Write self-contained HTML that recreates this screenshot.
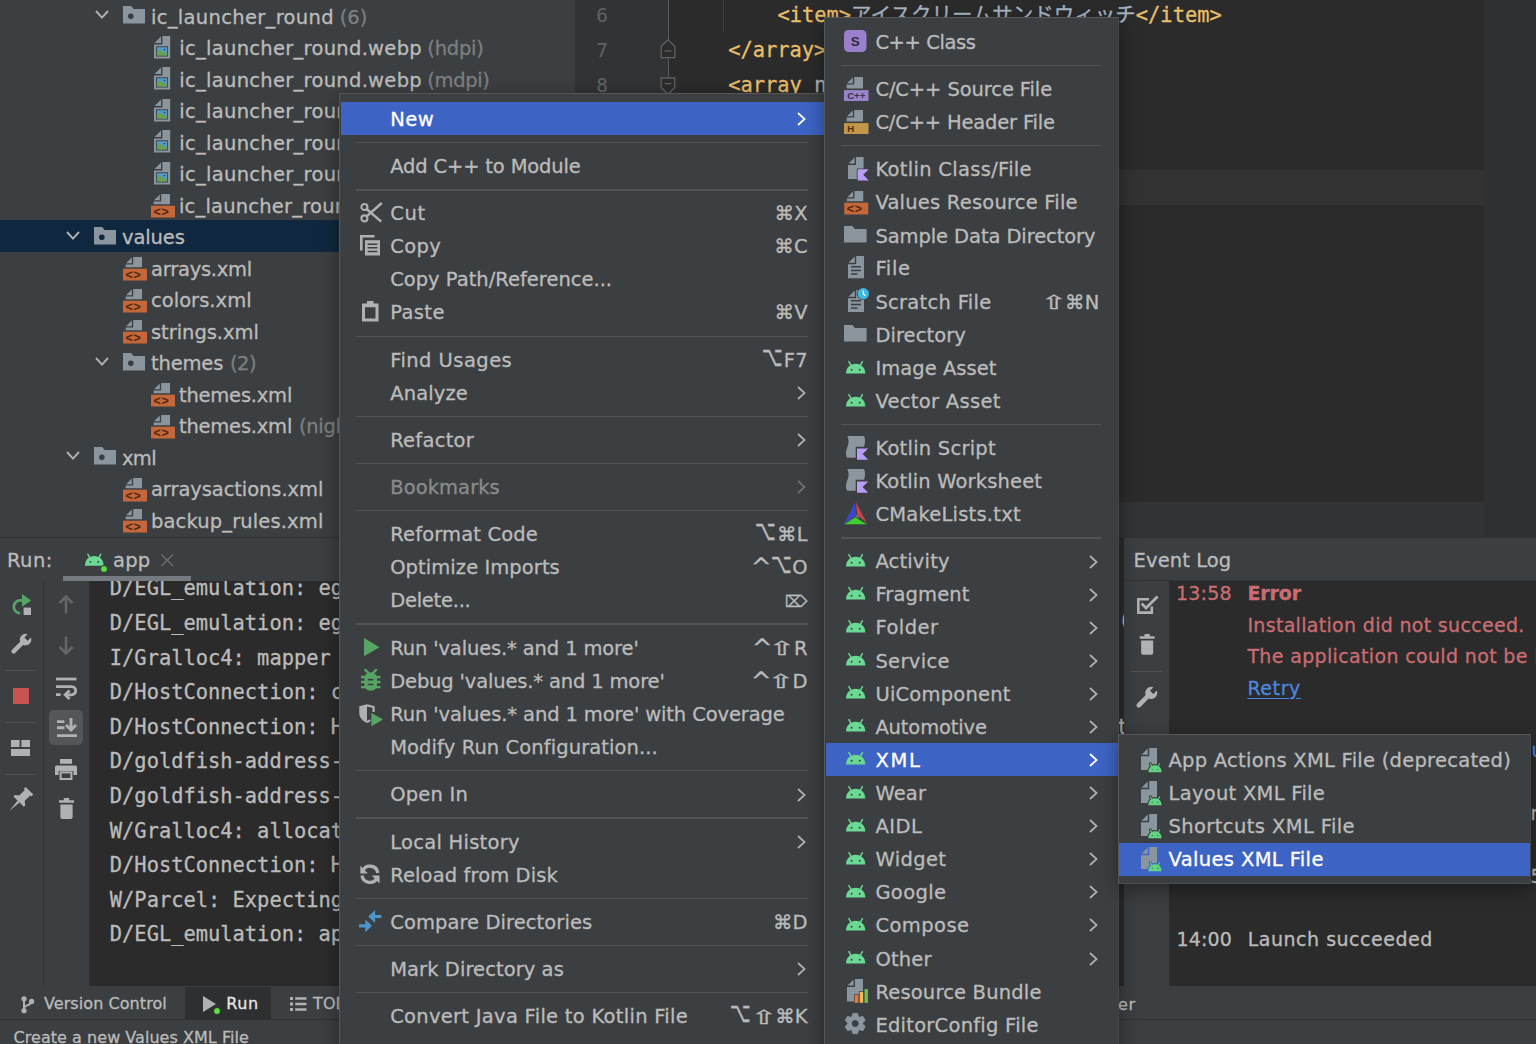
<!DOCTYPE html>
<html lang="en"><head><meta charset="utf-8"><title>Android Studio - New Values XML File</title>
<style>
html,body{margin:0;padding:0}
body{width:1536px;height:1044px;overflow:hidden;position:relative;background:#3c3f41;font-family:"DejaVu Sans","Liberation Sans","Noto Sans CJK JP",sans-serif;font-size:19.5px;color:#bbbbbb}
body>div,body>svg{position:absolute;display:block}
.t{white-space:pre;-webkit-text-stroke:0.3px currentColor}
.m{font-family:"DejaVu Sans Mono","Liberation Mono","Noto Sans CJK JP",monospace}
.sh{display:inline-block;font-size:.98em;line-height:1;transform:scaleX(1.7);margin:0 3.4px 0 3.4px;position:relative;top:.5px}
.op{display:inline-block;transform:scale(0.92,1.4);transform-origin:50% 78%}
.dl{display:inline-block;font-size:.82em;line-height:1}
.ct{display:inline-block;transform:scale(1.25,1.15);margin:0 .2px 0 .8px}
svg{overflow:visible}
svg text{font-family:"Liberation Sans",sans-serif;font-weight:700}
</style></head>
<body>
<div style="left:575px;top:0px;width:961px;height:538px;background:#2b2b2b;"></div>
<div style="left:575px;top:0px;width:93px;height:538px;background:#313335;"></div>
<div style="left:1484px;top:0px;width:52px;height:538px;background:#2f3031;"></div>
<div style="left:668px;top:169.5px;width:816px;height:35px;background:#323232;"></div>
<div style="left:575px;top:502px;width:909px;height:36px;background:#313335;"></div>
<div style="left:723px;top:0px;width:1px;height:32px;background:#3b3b3b;"></div>
<div style="left:667.5px;top:0px;width:1px;height:93px;background:#5a5d5f;"></div>
<svg style="left:660px;top:39px" width="16" height="20" viewBox="0 0 16 20"><path d="M1.2,7.3 L8,0.8 L14.8,7.3 V18.6 H1.2 Z" fill="#2b2b2b" stroke="#5f6265" stroke-width="1.3"/><path d="M4.6,12 H11.4" stroke="#5f6265" stroke-width="1.3"/></svg>
<svg style="left:660px;top:77px" width="16" height="18" viewBox="0 0 16 18"><path d="M1.2,1 H14.8 V10.5 L8,17 L1.2,10.5 Z" fill="#2b2b2b" stroke="#5f6265" stroke-width="1.3"/><path d="M4.6,6.6 H11.4" stroke="#5f6265" stroke-width="1.3"/></svg>
<div id="t1" class="t m" style="left:596.2px;top:0.5px;line-height:30px;font-size:19.4px;color:#606366;-webkit-text-stroke:0;">6</div>
<div id="t2" class="t m" style="left:596.2px;top:35.5px;line-height:30px;font-size:19.4px;color:#606366;-webkit-text-stroke:0;">7</div>
<div id="t3" class="t m" style="left:596.2px;top:70.5px;line-height:30px;font-size:19.4px;color:#606366;-webkit-text-stroke:0;">8</div>
<div id="t4" class="t m" style="left:777.4px;top:-2.5px;line-height:34px;font-size:20.4px;"><span style="color:#e8bf6a">&lt;item&gt;</span><span style="color:#a9b7c6;font-size:20.5px">アイスクリームサンドウィッチ</span><span style="color:#e8bf6a">&lt;/item&gt;</span></div>
<div id="t5" class="t m" style="left:728.2px;top:32.5px;line-height:34px;font-size:20.4px;color:#e8bf6a;">&lt;/array&gt;</div>
<div id="t6" class="t m" style="left:728.2px;top:67.5px;line-height:34px;font-size:20.4px;color:#bababa;"><span style="color:#e8bf6a">&lt;array</span> name=</div>
<div style="left:0px;top:0px;width:575px;height:538px;background:#3c3f41;"></div>
<div style="left:0px;top:220.3px;width:575px;height:31.9px;background:#10283f;"></div>
<svg style="left:95px;top:10.400000000000002px" width="14" height="9" viewBox="0 0 14 9"><path d="M1,1 L7,7.6 L13,1" stroke="#afb1b3" stroke-width="1.9" fill="none"/></svg>
<svg style="left:123px;top:6.400000000000002px" width="22" height="17.5" viewBox="0 0 22 17.5"><path fill-rule="evenodd" fill="#8a959d" d="M0,0 H8.2 L10.6,3 H22 V17.5 H0 Z M7.8,7.4 a2.9,2.9 0 1,0 0.01,0 Z"/></svg>
<div id="t7" class="t" style="left:151.0px;top:2.7px;line-height:30px;letter-spacing:0.322px;">ic_launcher_round</div>
<div id="t8" class="t" style="left:339.7px;top:2.7px;line-height:30px;color:#7d7f80;letter-spacing:-0.012px;">(6)</div>
<svg style="left:154px;top:35.8px" width="16" height="22.5" viewBox="0 0 16 22.5"><path fill="#8a959d" d="M8.4,0 H16.2 V22.5 H0 V8.4 H8.4 Z"/><path fill="#8a959d" d="M0.5,7 L7,0.5 V7 Z"/><rect x="2" y="10.3" width="12" height="10.2" fill="#3c3f41"/><rect x="2.9" y="11.2" width="10.3" height="8.3" fill="#4f9ccb"/><path d="M2.9,19.5 V16.2 C4.5,14.6 6,14 7.2,14.6 L13.2,17.8 V19.5 Z" fill="#69a14f"/><circle cx="10.5" cy="13.6" r="0.8" fill="#3c3f41"/></svg>
<div id="t9" class="t" style="left:179.3px;top:34.2px;line-height:30px;letter-spacing:0.288px;">ic_launcher_round.webp</div>
<div id="t10" class="t" style="left:427.3px;top:34.2px;line-height:30px;color:#7d7f80;letter-spacing:-0.232px;">(hdpi)</div>
<svg style="left:154px;top:67.3px" width="16" height="22.5" viewBox="0 0 16 22.5"><path fill="#8a959d" d="M8.4,0 H16.2 V22.5 H0 V8.4 H8.4 Z"/><path fill="#8a959d" d="M0.5,7 L7,0.5 V7 Z"/><rect x="2" y="10.3" width="12" height="10.2" fill="#3c3f41"/><rect x="2.9" y="11.2" width="10.3" height="8.3" fill="#4f9ccb"/><path d="M2.9,19.5 V16.2 C4.5,14.6 6,14 7.2,14.6 L13.2,17.8 V19.5 Z" fill="#69a14f"/><circle cx="10.5" cy="13.6" r="0.8" fill="#3c3f41"/></svg>
<div id="t11" class="t" style="left:179.3px;top:65.7px;line-height:30px;letter-spacing:0.288px;">ic_launcher_round.webp</div>
<div id="t12" class="t" style="left:427.3px;top:65.7px;line-height:30px;color:#7d7f80;letter-spacing:-0.358px;">(mdpi)</div>
<svg style="left:154px;top:98.8px" width="16" height="22.5" viewBox="0 0 16 22.5"><path fill="#8a959d" d="M8.4,0 H16.2 V22.5 H0 V8.4 H8.4 Z"/><path fill="#8a959d" d="M0.5,7 L7,0.5 V7 Z"/><rect x="2" y="10.3" width="12" height="10.2" fill="#3c3f41"/><rect x="2.9" y="11.2" width="10.3" height="8.3" fill="#4f9ccb"/><path d="M2.9,19.5 V16.2 C4.5,14.6 6,14 7.2,14.6 L13.2,17.8 V19.5 Z" fill="#69a14f"/><circle cx="10.5" cy="13.6" r="0.8" fill="#3c3f41"/></svg>
<div id="t13" class="t" style="left:179.3px;top:97.2px;line-height:30px;letter-spacing:0.288px;">ic_launcher_round.webp</div>
<div id="t14" class="t" style="left:427.3px;top:97.2px;line-height:30px;color:#7d7f80;letter-spacing:-0.617px;">(xhdpi)</div>
<svg style="left:154px;top:130.29999999999998px" width="16" height="22.5" viewBox="0 0 16 22.5"><path fill="#8a959d" d="M8.4,0 H16.2 V22.5 H0 V8.4 H8.4 Z"/><path fill="#8a959d" d="M0.5,7 L7,0.5 V7 Z"/><rect x="2" y="10.3" width="12" height="10.2" fill="#3c3f41"/><rect x="2.9" y="11.2" width="10.3" height="8.3" fill="#4f9ccb"/><path d="M2.9,19.5 V16.2 C4.5,14.6 6,14 7.2,14.6 L13.2,17.8 V19.5 Z" fill="#69a14f"/><circle cx="10.5" cy="13.6" r="0.8" fill="#3c3f41"/></svg>
<div id="t15" class="t" style="left:179.3px;top:128.7px;line-height:30px;letter-spacing:0.288px;">ic_launcher_round.webp</div>
<div id="t16" class="t" style="left:427.3px;top:128.7px;line-height:30px;color:#7d7f80;letter-spacing:-0.890px;">(xxhdpi)</div>
<svg style="left:154px;top:161.79999999999998px" width="16" height="22.5" viewBox="0 0 16 22.5"><path fill="#8a959d" d="M8.4,0 H16.2 V22.5 H0 V8.4 H8.4 Z"/><path fill="#8a959d" d="M0.5,7 L7,0.5 V7 Z"/><rect x="2" y="10.3" width="12" height="10.2" fill="#3c3f41"/><rect x="2.9" y="11.2" width="10.3" height="8.3" fill="#4f9ccb"/><path d="M2.9,19.5 V16.2 C4.5,14.6 6,14 7.2,14.6 L13.2,17.8 V19.5 Z" fill="#69a14f"/><circle cx="10.5" cy="13.6" r="0.8" fill="#3c3f41"/></svg>
<div id="t17" class="t" style="left:179.3px;top:160.2px;line-height:30px;letter-spacing:0.288px;">ic_launcher_round.webp</div>
<div id="t18" class="t" style="left:427.3px;top:160.2px;line-height:30px;color:#7d7f80;letter-spacing:-1.097px;">(xxxhdpi)</div>
<svg style="left:150.7px;top:194.1px" width="24" height="23.5" viewBox="0 0 24 23.5"><g transform="translate(2.6,0)"><path fill="#8a959d" d="M7.6,0 H16.4 V10.2 H0 V7.6 H7.6 Z"/><path fill="#8a959d" d="M0.5,6.2 L6.2,0.5 V6.2 Z"/></g><rect x="0" y="11.7" width="24" height="11.8" fill="#c5673a"/><text x="2.6" y="22.0" font-size="12.5" font-weight="400" text-anchor="start" fill="#50260e" letter-spacing="0.5">&lt;&gt;</text></svg>
<div id="t19" class="t" style="left:179.0px;top:191.7px;line-height:30px;letter-spacing:0.200px;">ic_launcher_round.xml</div>
<div id="t20" class="t" style="left:409.0px;top:191.7px;line-height:30px;color:#7d7f80;">(anydpi-v26)</div>
<svg style="left:66px;top:230.9px" width="14" height="9" viewBox="0 0 14 9"><path d="M1,1 L7,7.6 L13,1" stroke="#afb1b3" stroke-width="1.9" fill="none"/></svg>
<svg style="left:94px;top:226.9px" width="22" height="17.5" viewBox="0 0 22 17.5"><path fill-rule="evenodd" fill="#8a959d" d="M0,0 H8.2 L10.6,3 H22 V17.5 H0 Z M7.8,7.4 a2.9,2.9 0 1,0 0.01,0 Z"/></svg>
<div id="t21" class="t" style="left:122.0px;top:223.2px;line-height:30px;letter-spacing:-0.105px;">values</div>
<svg style="left:122.7px;top:257.1px" width="24" height="23.5" viewBox="0 0 24 23.5"><g transform="translate(2.6,0)"><path fill="#8a959d" d="M7.6,0 H16.4 V10.2 H0 V7.6 H7.6 Z"/><path fill="#8a959d" d="M0.5,6.2 L6.2,0.5 V6.2 Z"/></g><rect x="0" y="11.7" width="24" height="11.8" fill="#c5673a"/><text x="2.6" y="22.0" font-size="12.5" font-weight="400" text-anchor="start" fill="#50260e" letter-spacing="0.5">&lt;&gt;</text></svg>
<div id="t22" class="t" style="left:151.0px;top:254.7px;line-height:30px;letter-spacing:-0.239px;">arrays.xml</div>
<svg style="left:122.7px;top:288.6px" width="24" height="23.5" viewBox="0 0 24 23.5"><g transform="translate(2.6,0)"><path fill="#8a959d" d="M7.6,0 H16.4 V10.2 H0 V7.6 H7.6 Z"/><path fill="#8a959d" d="M0.5,6.2 L6.2,0.5 V6.2 Z"/></g><rect x="0" y="11.7" width="24" height="11.8" fill="#c5673a"/><text x="2.6" y="22.0" font-size="12.5" font-weight="400" text-anchor="start" fill="#50260e" letter-spacing="0.5">&lt;&gt;</text></svg>
<div id="t23" class="t" style="left:151.0px;top:286.2px;line-height:30px;letter-spacing:0.029px;">colors.xml</div>
<svg style="left:122.7px;top:320.1px" width="24" height="23.5" viewBox="0 0 24 23.5"><g transform="translate(2.6,0)"><path fill="#8a959d" d="M7.6,0 H16.4 V10.2 H0 V7.6 H7.6 Z"/><path fill="#8a959d" d="M0.5,6.2 L6.2,0.5 V6.2 Z"/></g><rect x="0" y="11.7" width="24" height="11.8" fill="#c5673a"/><text x="2.6" y="22.0" font-size="12.5" font-weight="400" text-anchor="start" fill="#50260e" letter-spacing="0.5">&lt;&gt;</text></svg>
<div id="t24" class="t" style="left:151.0px;top:317.7px;line-height:30px;letter-spacing:-0.040px;">strings.xml</div>
<svg style="left:95px;top:356.90000000000003px" width="14" height="9" viewBox="0 0 14 9"><path d="M1,1 L7,7.6 L13,1" stroke="#afb1b3" stroke-width="1.9" fill="none"/></svg>
<svg style="left:123px;top:352.90000000000003px" width="22" height="17.5" viewBox="0 0 22 17.5"><path fill-rule="evenodd" fill="#8a959d" d="M0,0 H8.2 L10.6,3 H22 V17.5 H0 Z M7.8,7.4 a2.9,2.9 0 1,0 0.01,0 Z"/></svg>
<div id="t25" class="t" style="left:151.0px;top:349.2px;line-height:30px;letter-spacing:-0.173px;">themes</div>
<div id="t26" class="t" style="left:230.0px;top:349.2px;line-height:30px;color:#7d7f80;letter-spacing:-0.512px;">(2)</div>
<svg style="left:150.7px;top:383.1px" width="24" height="23.5" viewBox="0 0 24 23.5"><g transform="translate(2.6,0)"><path fill="#8a959d" d="M7.6,0 H16.4 V10.2 H0 V7.6 H7.6 Z"/><path fill="#8a959d" d="M0.5,6.2 L6.2,0.5 V6.2 Z"/></g><rect x="0" y="11.7" width="24" height="11.8" fill="#c5673a"/><text x="2.6" y="22.0" font-size="12.5" font-weight="400" text-anchor="start" fill="#50260e" letter-spacing="0.5">&lt;&gt;</text></svg>
<div id="t27" class="t" style="left:179.0px;top:380.7px;line-height:30px;letter-spacing:-0.223px;">themes.xml</div>
<svg style="left:150.7px;top:414.6px" width="24" height="23.5" viewBox="0 0 24 23.5"><g transform="translate(2.6,0)"><path fill="#8a959d" d="M7.6,0 H16.4 V10.2 H0 V7.6 H7.6 Z"/><path fill="#8a959d" d="M0.5,6.2 L6.2,0.5 V6.2 Z"/></g><rect x="0" y="11.7" width="24" height="11.8" fill="#c5673a"/><text x="2.6" y="22.0" font-size="12.5" font-weight="400" text-anchor="start" fill="#50260e" letter-spacing="0.5">&lt;&gt;</text></svg>
<div id="t28" class="t" style="left:179.0px;top:412.2px;line-height:30px;letter-spacing:-0.223px;">themes.xml</div>
<div id="t29" class="t" style="left:299.0px;top:412.2px;line-height:30px;color:#7d7f80;letter-spacing:-0.296px;">(night)</div>
<svg style="left:66px;top:451.40000000000003px" width="14" height="9" viewBox="0 0 14 9"><path d="M1,1 L7,7.6 L13,1" stroke="#afb1b3" stroke-width="1.9" fill="none"/></svg>
<svg style="left:94px;top:447.40000000000003px" width="22" height="17.5" viewBox="0 0 22 17.5"><path fill-rule="evenodd" fill="#8a959d" d="M0,0 H8.2 L10.6,3 H22 V17.5 H0 Z M7.8,7.4 a2.9,2.9 0 1,0 0.01,0 Z"/></svg>
<div id="t30" class="t" style="left:122.0px;top:443.7px;line-height:30px;letter-spacing:-0.679px;">xml</div>
<svg style="left:122.7px;top:477.6px" width="24" height="23.5" viewBox="0 0 24 23.5"><g transform="translate(2.6,0)"><path fill="#8a959d" d="M7.6,0 H16.4 V10.2 H0 V7.6 H7.6 Z"/><path fill="#8a959d" d="M0.5,6.2 L6.2,0.5 V6.2 Z"/></g><rect x="0" y="11.7" width="24" height="11.8" fill="#c5673a"/><text x="2.6" y="22.0" font-size="12.5" font-weight="400" text-anchor="start" fill="#50260e" letter-spacing="0.5">&lt;&gt;</text></svg>
<div id="t31" class="t" style="left:151.0px;top:475.2px;line-height:30px;letter-spacing:-0.083px;">arraysactions.xml</div>
<svg style="left:122.7px;top:509.1px" width="24" height="23.5" viewBox="0 0 24 23.5"><g transform="translate(2.6,0)"><path fill="#8a959d" d="M7.6,0 H16.4 V10.2 H0 V7.6 H7.6 Z"/><path fill="#8a959d" d="M0.5,6.2 L6.2,0.5 V6.2 Z"/></g><rect x="0" y="11.7" width="24" height="11.8" fill="#c5673a"/><text x="2.6" y="22.0" font-size="12.5" font-weight="400" text-anchor="start" fill="#50260e" letter-spacing="0.5">&lt;&gt;</text></svg>
<div id="t32" class="t" style="left:151.0px;top:506.7px;line-height:30px;letter-spacing:0.131px;">backup_rules.xml</div>
<div style="left:0px;top:537px;width:1124px;height:449px;background:#3c3f41;"></div>
<div style="left:0px;top:537px;width:1536px;height:1px;background:#323232;"></div>
<div style="left:88.5px;top:580.5px;width:1035.5px;height:405px;background:#2b2b2b;"></div>
<div style="left:43px;top:580.5px;width:1px;height:405px;background:#323232;"></div>
<div id="t33" class="t m" style="left:109.8px;top:571.3px;line-height:34px;font-size:20.4px;">D/EGL_emulation: eg</div>
<div id="t34" class="t m" style="left:109.8px;top:605.9px;line-height:34px;font-size:20.4px;">D/EGL_emulation: eg</div>
<div id="t35" class="t m" style="left:109.8px;top:640.5px;line-height:34px;font-size:20.4px;">I/Gralloc4: mapper </div>
<div id="t36" class="t m" style="left:109.8px;top:675.1px;line-height:34px;font-size:20.4px;">D/HostConnection: c</div>
<div id="t37" class="t m" style="left:109.8px;top:709.7px;line-height:34px;font-size:20.4px;">D/HostConnection: H</div>
<div id="t38" class="t m" style="left:109.8px;top:744.3px;line-height:34px;font-size:20.4px;">D/goldfish-address-</div>
<div id="t39" class="t m" style="left:109.8px;top:778.9px;line-height:34px;font-size:20.4px;">D/goldfish-address-</div>
<div id="t40" class="t m" style="left:109.8px;top:813.5px;line-height:34px;font-size:20.4px;">W/Gralloc4: allocat</div>
<div id="t41" class="t m" style="left:109.8px;top:848.1px;line-height:34px;font-size:20.4px;">D/HostConnection: H</div>
<div id="t42" class="t m" style="left:109.8px;top:882.7px;line-height:34px;font-size:20.4px;">W/Parcel: Expecting</div>
<div id="t43" class="t m" style="left:109.8px;top:917.3px;line-height:34px;font-size:20.4px;">D/EGL_emulation: ap</div>
<div style="left:0px;top:538px;width:1124px;height:42.5px;background:#3c3f41;"></div>
<div id="t44" class="t" style="left:7.0px;top:546.4px;line-height:30px;letter-spacing:0.446px;">Run:</div>
<svg style="left:85.4px;top:552.8px" width="18.6" height="13.2" viewBox="0 0 20 13"><path d="M0,13 C0,6.6 4.4,2.7 10,2.7 C15.6,2.7 20,6.6 20,13 Z" fill="#6bd894"/><path d="M5.2,4.6 L3,0.6 M14.8,4.6 L17,0.6" stroke="#6bd894" stroke-width="1.5" stroke-linecap="round"/><circle cx="5.8" cy="9" r="1" fill="#3c3f41"/><circle cx="14.2" cy="9" r="1" fill="#3c3f41"/></svg>
<div style="left:100px;top:564.5px;width:6.4px;height:6.4px;border-radius:50%;background:#60e143;border:1px solid #35383a"></div>
<div id="t45" class="t" style="left:113.0px;top:546.4px;line-height:30px;letter-spacing:0.196px;">app</div>
<svg style="left:161px;top:553.5px" width="12.5" height="12.5" viewBox="0 0 12.5 12.5"><path d="M0.5,0.5 L12,12 M12,0.5 L0.5,12" stroke="#6e7073" stroke-width="1.3" fill="none"/></svg>
<div style="left:63.2px;top:576.3px;width:127.4px;height:4.7px;background:#747a80;"></div>
<svg style="left:10.5px;top:593.5px" width="21" height="21" viewBox="0 0 21 21"><path d="M11.5,6.4 H9.2 A6.4,6.4 0 0,0 9.2,19.2" fill="none" stroke="#57a564" stroke-width="2.6"/><path d="M11,0 L20.2,6.4 L11,12.8 Z" fill="#57a564"/><rect x="12.6" y="13.6" width="7.4" height="7.4" fill="#afb1b3"/></svg>
<svg style="left:10.5px;top:633px" width="21" height="21" viewBox="0 0 21 21"><path d="M2.6,18.4 L12.5,8.5" stroke="#afb1b3" stroke-width="4.4" stroke-linecap="round"/><path d="M19.9,4.4 L16.6,7.7 L13.4,4.5 L16.6,1.2 A5.8,5.8 0 1,0 19.9,4.4 Z" fill="#afb1b3"/></svg>
<div style="left:5px;top:669.5px;width:31px;height:1px;background:#515151;"></div>
<div style="left:13px;top:688.2px;width:15.7px;height:15.5px;background:#c75450;"></div>
<div style="left:5px;top:721.5px;width:31px;height:1px;background:#515151;"></div>
<svg style="left:11px;top:739.6px" width="19" height="16" viewBox="0 0 19 16"><path fill="#afb1b3" d="M0,0 H8.6 V7 H0 Z M10.4,0 H19 V7 H10.4 Z M0,9 H19 V16 H0 Z"/></svg>
<div style="left:5px;top:773.5px;width:31px;height:1px;background:#515151;"></div>
<svg style="left:9px;top:789px" width="22" height="22" viewBox="0 0 22 22"><g transform="translate(13.8,8.4) rotate(45) scale(1.18)" fill="#afb1b3"><path d="M-4.6,-8 H4.6 V-5.6 H3.2 V1 L6.2,3.2 V5 H-6.2 V3.2 L-3.2,1 V-5.6 H-4.6 Z"/><path d="M-1.2,5 H1.2 L0,16 Z"/></g></svg>
<svg style="left:58px;top:595px" width="16" height="19" viewBox="0 0 16 19"><path d="M8,1.5 V18.5 M1.6,8 L8,1.5 L14.4,8" fill="none" stroke="#636567" stroke-width="2.6"/></svg>
<svg style="left:58px;top:636px" width="16" height="19" viewBox="0 0 16 19"><path d="M8,0.5 V17.5 M1.6,11 L8,17.5 L14.4,11" fill="none" stroke="#636567" stroke-width="2.6"/></svg>
<svg style="left:55.5px;top:676.5px" width="21" height="22" viewBox="0 0 21 22"><g fill="none" stroke="#afb1b3" stroke-width="2.8"><path d="M0,2 H20.4"/><path d="M0,9.6 H15.6 A4.1,4.1 0 0,1 15.6,17.8 H10"/><path d="M13.6,13.6 L9.2,17.8 L13.6,22"/><path d="M0,17.6 H4.6"/></g></svg>
<div style="left:48.9px;top:710.3px;width:34.5px;height:34.5px;border-radius:5px;background:#53575a"></div>
<svg style="left:56.5px;top:718px" width="20" height="19" viewBox="0 0 20 19"><g fill="none" stroke="#afb1b3" stroke-width="2.9"><path d="M0,3.6 H7.4 M0,9.8 H7.4 M0,17.6 H20"/><path d="M14,0 V11.6 M9,7 L14,12 L19,7"/></g></svg>
<svg style="left:55px;top:759px" width="22" height="21" viewBox="0 0 22 21"><rect x="5" y="0" width="12" height="4.8" fill="#afb1b3"/><path fill="#afb1b3" d="M1.6,6.6 H20.4 Q22,6.6 22,8.2 V16 H18.4 V12 H3.6 V16 H0 V8.2 Q0,6.6 1.6,6.6 Z"/><rect x="5.6" y="13.4" width="10.8" height="6.6" fill="none" stroke="#afb1b3" stroke-width="2"/></svg>
<svg style="left:58.5px;top:798px" width="15" height="21" viewBox="0 0 15 21"><path fill="#afb1b3" d="M4.8,0 H10.2 V2.2 H15 V4.8 H0 V2.2 H4.8 Z M1.4,6.6 H13.6 V19.2 Q13.6,21 11.8,21 H3.2 Q1.4,21 1.4,19.2 Z"/></svg>
<div style="left:1118px;top:538px;width:6.4px;height:448px;background:#2b2b2b;"></div>
<div id="t46" class="t m" style="left:1118.6px;top:603.1px;line-height:34px;font-size:20.4px;">(</div>
<div id="t47" class="t m" style="left:1116.0px;top:710.1px;line-height:34px;font-size:20.4px;">t</div>
<div style="left:1124.4px;top:538px;width:412px;height:448px;background:#3c3f41;"></div>
<div style="left:1169px;top:580.5px;width:367px;height:405px;background:#2b2b2b;"></div>
<div style="left:1124.4px;top:580px;width:412px;height:1px;background:#323232;"></div>
<div id="t48" class="t" style="left:1133.6px;top:545.6px;line-height:30px;letter-spacing:0.088px;">Event Log</div>
<svg style="left:1136.9px;top:595.2px" width="22" height="19" viewBox="0 0 22 19"><path d="M14.8,11.6 V17.6 H1.3 V4.2 H12" fill="none" stroke="#afb1b3" stroke-width="2.6"/><path d="M4.6,8.6 L9,13 L20.6,1.4" fill="none" stroke="#afb1b3" stroke-width="2.8"/></svg>
<svg style="left:1139px;top:634.3px" width="16.3" height="20.7" viewBox="0 0 15 21"><path fill="#afb1b3" d="M4.8,0 H10.2 V2.2 H15 V4.8 H0 V2.2 H4.8 Z M1.4,6.6 H13.6 V19.2 Q13.6,21 11.8,21 H3.2 Q1.4,21 1.4,19.2 Z"/></svg>
<div style="left:1131.2px;top:671.3px;width:31.2px;height:1px;background:#515151;"></div>
<svg style="left:1136.4px;top:686.4px" width="22" height="22" viewBox="0 0 21 21"><path d="M2.6,18.4 L12.5,8.5" stroke="#afb1b3" stroke-width="4.4" stroke-linecap="round"/><path d="M19.9,4.4 L16.6,7.7 L13.4,4.5 L16.6,1.2 A5.8,5.8 0 1,0 19.9,4.4 Z" fill="#afb1b3"/></svg>
<div id="t49" class="t" style="left:1176.0px;top:577.8px;line-height:30px;font-size:19px;color:#c96d73;letter-spacing:0.211px;">13:58</div>
<div id="t50" class="t" style="left:1247.4px;top:577.8px;line-height:30px;font-size:19px;color:#c96d73;font-weight:700;letter-spacing:-0.088px;">Error</div>
<div id="t51" class="t" style="left:1247.4px;top:609.9px;line-height:30px;font-size:19px;color:#c96d73;letter-spacing:0.315px;">Installation did not succeed.</div>
<div id="t52" class="t" style="left:1247.4px;top:641.1px;line-height:30px;font-size:19px;color:#c96d73;letter-spacing:0.349px;">The application could not be installed.</div>
<div id="t53" class="t" style="left:1247.4px;top:672.5px;line-height:30px;font-size:19px;color:#4b87df;letter-spacing:0.586px;text-decoration:underline;text-underline-offset:3px;">Retry</div>
<div id="t54" class="t" style="left:1531.6px;top:735.3px;line-height:30px;font-size:19px;color:#4b87df;">update</div>
<div id="t55" class="t" style="left:1530.6px;top:797.7px;line-height:30px;font-size:19px;">null</div>
<div id="t56" class="t" style="left:1530.6px;top:860.5px;line-height:30px;font-size:19px;">5 ms</div>
<div id="t57" class="t" style="left:1176.4px;top:924.0px;line-height:30px;font-size:19px;letter-spacing:0.161px;">14:00</div>
<div id="t58" class="t" style="left:1247.7px;top:924.0px;line-height:30px;font-size:19px;letter-spacing:0.515px;">Launch succeeded</div>
<div style="left:0px;top:985.5px;width:1536px;height:58.5px;background:#3c3f41;"></div>
<div style="left:0px;top:1019px;width:1536px;height:1px;background:#323232;"></div>
<div style="left:184.6px;top:987px;width:86.4px;height:32px;background:#2d2f30;"></div>
<svg style="left:20.7px;top:995.5px" width="13.5" height="17.5" viewBox="0 0 13.5 17.5"><g fill="#afb1b3"><circle cx="3" cy="2.8" r="2.6"/><circle cx="3" cy="14.7" r="2.6"/><circle cx="10.6" cy="5.4" r="2.6"/></g><path d="M3,2.8 V14.7 M10.6,5.4 C10.6,9.6 3,8.6 3,12.6" fill="none" stroke="#afb1b3" stroke-width="2"/></svg>
<div id="t59" class="t" style="left:44.0px;top:992.4px;line-height:24px;font-size:16px;letter-spacing:0.074px;">Version Control</div>
<svg style="left:203.3px;top:996px" width="13" height="16" viewBox="0 0 13 16"><path d="M0,0 L13,8 L0,16 Z" fill="#afb1b3"/></svg>
<div style="left:213.4px;top:1007.4px;width:6px;height:6px;border-radius:50%;background:#60e143;border:1px solid #2d2f30"></div>
<div id="t60" class="t" style="left:226.3px;top:992.4px;line-height:24px;font-size:16px;color:#e6e6e6;letter-spacing:0.609px;">Run</div>
<svg style="left:289.8px;top:996.5px" width="16.5" height="14" viewBox="0 0 16.5 14"><path fill="#afb1b3" d="M0,0 H3 V3 H0 Z M5.2,0.2 H16.5 V2.8 H5.2 Z M0,5.5 H3 V8.5 H0 Z M5.2,5.7 H16.5 V8.3 H5.2 Z M0,11 H3 V14 H0 Z M5.2,11.2 H16.5 V13.8 H5.2 Z"/></svg>
<div id="t61" class="t" style="left:313.0px;top:992.4px;line-height:24px;font-size:16px;letter-spacing:0.104px;">TODO</div>
<div id="t62" class="t" style="left:1118.0px;top:992.7px;line-height:24px;font-size:16px;letter-spacing:0.578px;">er</div>
<div id="t63" class="t" style="left:13.6px;top:1025.5px;line-height:24px;font-size:16px;letter-spacing:0.037px;">Create a new Values XML File</div>
<div style="left:339px;top:93px;width:486px;height:960px;background:#3c3f41;border:1px solid #555759;border-right-color:#444648;border-bottom-color:#4a4c4e;box-shadow:0 5px 18px rgba(0,0,0,.40);box-sizing:border-box;"></div>
<div style="left:340.5px;top:102px;width:483.3px;height:33.4px;background:#3d64c4;"></div>
<div style="left:356px;top:141.95px;width:452.4px;height:1.5px;background:#515355;"></div>
<div style="left:356px;top:189.25px;width:452.4px;height:1.5px;background:#515355;"></div>
<div style="left:356px;top:335.85px;width:452.4px;height:1.5px;background:#515355;"></div>
<div style="left:356px;top:415.75px;width:452.4px;height:1.5px;background:#515355;"></div>
<div style="left:356px;top:462.85px;width:452.4px;height:1.5px;background:#515355;"></div>
<div style="left:356px;top:509.95px;width:452.4px;height:1.5px;background:#515355;"></div>
<div style="left:356px;top:623.25px;width:452.4px;height:1.5px;background:#515355;"></div>
<div style="left:356px;top:769.85px;width:452.4px;height:1.5px;background:#515355;"></div>
<div style="left:356px;top:817.05px;width:452.4px;height:1.5px;background:#515355;"></div>
<div style="left:356px;top:897.55px;width:452.4px;height:1.5px;background:#515355;"></div>
<div style="left:356px;top:944.85px;width:452.4px;height:1.5px;background:#515355;"></div>
<div style="left:356px;top:991.75px;width:452.4px;height:1.5px;background:#515355;"></div>
<div id="t64" class="t" style="left:390.2px;top:104.7px;line-height:30px;color:#ffffff;letter-spacing:0.533px;">New</div>
<svg style="left:796.5px;top:111.89999999999999px" width="9" height="14" viewBox="0 0 9 14"><path d="M1,1 L7.6,7 L1,13" stroke="#ffffff" stroke-width="1.7" fill="none"/></svg>
<div id="t65" class="t" style="left:390.2px;top:152.1px;line-height:30px;letter-spacing:-0.158px;">Add C++ to Module</div>
<div id="t66" class="t" style="left:390.2px;top:199.1px;line-height:30px;letter-spacing:0.688px;">Cut</div>
<div id="t67" class="t" style="right:728.2px;top:199.1px;line-height:30px;letter-spacing:0.2px;">⌘X</div>
<div id="t68" class="t" style="left:390.2px;top:232.3px;line-height:30px;letter-spacing:0.378px;">Copy</div>
<div id="t69" class="t" style="right:728.2px;top:232.3px;line-height:30px;letter-spacing:0.2px;">⌘C</div>
<div id="t70" class="t" style="left:390.2px;top:265.3px;line-height:30px;letter-spacing:0.001px;">Copy Path/Reference...</div>
<div id="t71" class="t" style="left:390.2px;top:298.3px;line-height:30px;letter-spacing:0.389px;">Paste</div>
<div id="t72" class="t" style="right:728.2px;top:298.3px;line-height:30px;letter-spacing:0.2px;">⌘V</div>
<div id="t73" class="t" style="left:390.2px;top:345.6px;line-height:30px;letter-spacing:0.452px;">Find Usages</div>
<div id="t74" class="t" style="right:728.2px;top:345.6px;line-height:30px;letter-spacing:0.2px;"><span class="op">⌥</span>F7</div>
<div id="t75" class="t" style="left:390.2px;top:378.7px;line-height:30px;letter-spacing:0.126px;">Analyze</div>
<svg style="left:796.5px;top:385.90000000000003px" width="9" height="14" viewBox="0 0 9 14"><path d="M1,1 L7.6,7 L1,13" stroke="#afb1b3" stroke-width="1.7" fill="none"/></svg>
<div id="t76" class="t" style="left:390.2px;top:426.1px;line-height:30px;letter-spacing:0.256px;">Refactor</div>
<svg style="left:796.5px;top:433.3px" width="9" height="14" viewBox="0 0 9 14"><path d="M1,1 L7.6,7 L1,13" stroke="#afb1b3" stroke-width="1.7" fill="none"/></svg>
<div id="t77" class="t" style="left:390.2px;top:473.1px;line-height:30px;color:#8a8c8d;letter-spacing:0.081px;">Bookmarks</div>
<svg style="left:796.5px;top:480.3px" width="9" height="14" viewBox="0 0 9 14"><path d="M1,1 L7.6,7 L1,13" stroke="#6d6f70" stroke-width="1.7" fill="none"/></svg>
<div id="t78" class="t" style="left:390.2px;top:520.3px;line-height:30px;letter-spacing:0.145px;">Reformat Code</div>
<div id="t79" class="t" style="right:728.2px;top:520.3px;line-height:30px;letter-spacing:0.2px;"><span class="op">⌥</span>⌘L</div>
<div id="t80" class="t" style="left:390.2px;top:553.4px;line-height:30px;letter-spacing:0.072px;">Optimize Imports</div>
<div id="t81" class="t" style="right:728.2px;top:553.4px;line-height:30px;letter-spacing:0.2px;"><span class="ct">^</span><span class="op">⌥</span>O</div>
<div id="t82" class="t" style="left:390.2px;top:586.4px;line-height:30px;letter-spacing:-0.259px;">Delete...</div>
<div id="t83" class="t" style="right:728.2px;top:586.4px;line-height:30px;letter-spacing:0.2px;"><span class="dl">⌦</span></div>
<div id="t84" class="t" style="left:390.2px;top:633.8px;line-height:30px;letter-spacing:-0.137px;">Run &#x27;values.* and 1 more&#x27;</div>
<div id="t85" class="t" style="right:728.2px;top:633.8px;line-height:30px;letter-spacing:0.2px;"><span class="ct">^</span><span class="sh">⇧</span>R</div>
<div id="t86" class="t" style="left:390.2px;top:666.8px;line-height:30px;letter-spacing:-0.155px;">Debug &#x27;values.* and 1 more&#x27;</div>
<div id="t87" class="t" style="right:728.2px;top:666.8px;line-height:30px;letter-spacing:0.2px;"><span class="ct">^</span><span class="sh">⇧</span>D</div>
<div id="t88" class="t" style="left:390.2px;top:700.0px;line-height:30px;letter-spacing:-0.118px;">Run &#x27;values.* and 1 more&#x27; with Coverage</div>
<div id="t89" class="t" style="left:390.2px;top:733.0px;line-height:30px;letter-spacing:0.091px;">Modify Run Configuration...</div>
<div id="t90" class="t" style="left:390.2px;top:780.3px;line-height:30px;letter-spacing:0.199px;">Open In</div>
<svg style="left:796.5px;top:787.5px" width="9" height="14" viewBox="0 0 9 14"><path d="M1,1 L7.6,7 L1,13" stroke="#afb1b3" stroke-width="1.7" fill="none"/></svg>
<div id="t91" class="t" style="left:390.2px;top:827.7px;line-height:30px;letter-spacing:0.273px;">Local History</div>
<svg style="left:796.5px;top:834.9px" width="9" height="14" viewBox="0 0 9 14"><path d="M1,1 L7.6,7 L1,13" stroke="#afb1b3" stroke-width="1.7" fill="none"/></svg>
<div id="t92" class="t" style="left:390.2px;top:860.7px;line-height:30px;letter-spacing:0.106px;">Reload from Disk</div>
<div id="t93" class="t" style="left:390.2px;top:907.7px;line-height:30px;letter-spacing:0.079px;">Compare Directories</div>
<div id="t94" class="t" style="right:728.2px;top:907.7px;line-height:30px;letter-spacing:0.2px;">⌘D</div>
<div id="t95" class="t" style="left:390.2px;top:954.9px;line-height:30px;letter-spacing:0.071px;">Mark Directory as</div>
<svg style="left:796.5px;top:962.0999999999999px" width="9" height="14" viewBox="0 0 9 14"><path d="M1,1 L7.6,7 L1,13" stroke="#afb1b3" stroke-width="1.7" fill="none"/></svg>
<div id="t96" class="t" style="left:390.2px;top:1002.3px;line-height:30px;letter-spacing:0.286px;">Convert Java File to Kotlin File</div>
<div id="t97" class="t" style="right:728.2px;top:1002.3px;line-height:30px;letter-spacing:0.2px;"><span class="op">⌥</span><span class="sh">⇧</span>⌘K</div>
<svg style="left:359.7px;top:202.4px" width="22" height="21" viewBox="0 0 22 21"><g fill="none" stroke="#afb1b3"><circle cx="4.4" cy="5" r="3" stroke-width="2.1"/><circle cx="4.4" cy="16.4" r="3" stroke-width="2.1"/><path d="M6.6,7 L21.2,19.6 M6.6,14.4 L21.8,1" stroke-width="2.5"/></g></svg>
<svg style="left:360.4px;top:234.7px" width="20" height="20.5" viewBox="0 0 20 20.5"><path fill="#afb1b3" d="M0,0 H14.5 V2.6 H2.6 V15.5 H0 Z"/><rect x="5" y="5.2" width="15" height="15.3" fill="#afb1b3"/><path d="M7.6,9.2 H17.4 M7.6,12.8 H17.4 M7.6,16.4 H17.4" stroke="#3c3f41" stroke-width="1.5"/></svg>
<svg style="left:361.9px;top:300.8px" width="16.5" height="20.5" viewBox="0 0 16.5 20.5"><path fill-rule="evenodd" fill="#afb1b3" d="M0,2.6 H5 V0 H11.5 V2.6 H16.5 V20.5 H0 Z M3,6.3 V17.5 H13.5 V6.3 Z"/></svg>
<svg style="left:363.7px;top:638.1px" width="15.5" height="18.3" viewBox="0 0 15.5 18.3"><path d="M0,0 L15.5,9.15 L0,18.3 Z" fill="#57a564"/></svg>
<svg style="left:360.6px;top:669.2px" width="19.4" height="21.8" viewBox="0 0 19.4 21.8"><g stroke="#57a564" stroke-width="2.4" fill="none"><path d="M0,8 H19.4 M0,13 H19.4 M0,18.1 H19.4"/><path d="M4.3,0.9 L7.8,4.4 M15.1,0.9 L11.6,4.4" stroke-linecap="round"/></g><path d="M3.4,10 C3.4,5.5 6,3.4 9.7,3.4 C13.4,3.4 16,5.5 16,10 V15 C16,19.5 13.3,21.6 9.7,21.6 C6.1,21.6 3.4,19.5 3.4,15 Z" fill="#57a564"/><path d="M6.8,9.8 H12.4 V11.4 H6.8 Z M6.8,14.7 H12.4 V16.3 H6.8 Z" fill="#3c3f41"/></svg>
<svg style="left:359px;top:703.5px" width="24" height="22.5" viewBox="0 0 24 22.5"><path d="M0.3,2.2 L8,0.3 V19 C3.2,16.8 0.3,13.4 0.3,9 Z" fill="#afb1b3"/><path d="M8,1.4 L14.6,3 V8" fill="none" stroke="#afb1b3" stroke-width="2.2"/><path d="M8,18 C9.5,17.4 10.4,16.8 11.2,16" fill="none" stroke="#afb1b3" stroke-width="2"/><path d="M12.4,9 L24,15.6 L12.4,22.3 Z" fill="#57a564" stroke="#3c3f41" stroke-width="0"/></svg>
<svg style="left:360.4px;top:864.5px" width="20.2" height="19.5" viewBox="0 0 20.2 19.5"><g fill="none" stroke="#afb1b3" stroke-width="3.3"><path d="M2.65,6 A8,8 0 0,1 17.9,8"/><path d="M1.98,10.6 A8,8 0 0,0 17.15,12.8"/></g><path d="M0.4,0.7 V8.4 H7.9 Z" fill="#afb1b3"/><path d="M19.6,18.5 V10.5 H11.8 Z" fill="#afb1b3"/></svg>
<svg style="left:359px;top:910px" width="22.6" height="22" viewBox="0 0 22.6 22"><path fill="#4f94c8" d="M9.3,6.5 L16.1,-0.1 V5 H22.4 V8 H16.1 V12.9 Z M13,15.8 L6.3,9.4 V14.3 H0 V17.5 H6.3 V22.3 Z"/></svg>
<div style="left:824px;top:16.5px;width:295px;height:1040px;background:#3c3f41;border:1px solid #555759;border-right-color:#444648;border-bottom-color:#4a4c4e;box-shadow:0 5px 18px rgba(0,0,0,.40);box-sizing:border-box;"></div>
<div style="left:825.5px;top:743px;width:292.5px;height:33.2px;background:#3d64c4;"></div>
<div style="left:841.2px;top:64.65px;width:259.79999999999995px;height:1.5px;background:#515355;"></div>
<div style="left:841.2px;top:144.85px;width:259.79999999999995px;height:1.5px;background:#515355;"></div>
<div style="left:841.2px;top:423.55px;width:259.79999999999995px;height:1.5px;background:#515355;"></div>
<div style="left:841.2px;top:537.15px;width:259.79999999999995px;height:1.5px;background:#515355;"></div>
<div id="t98" class="t" style="left:875.4px;top:28.1px;line-height:30px;letter-spacing:-0.400px;">C++ Class</div>
<svg style="left:844.1px;top:30.2px" width="22.5" height="22" viewBox="0 0 22.5 22"><rect width="22.5" height="22" rx="4.5" fill="#9a7fcc"/><text x="11.25" y="16" font-size="13.5" text-anchor="middle" fill="#2e2c35">S</text></svg>
<div id="t99" class="t" style="left:875.4px;top:75.3px;line-height:30px;letter-spacing:-0.106px;">C/C++ Source File</div>
<svg style="left:844px;top:77.0px" width="24.5" height="24" viewBox="0 0 24.5 24"><g transform="translate(2.6,0)"><path fill="#8a959d" d="M7.6,0 H16.4 V11.6 H0 V7.6 H7.6 Z"/><path fill="#8a959d" d="M0.5,6.2 L6.2,0.5 V6.2 Z"/></g><rect x="0" y="13.1" width="24.5" height="10.9" fill="#9784c9"/><text x="12.25" y="21.9" font-size="9.6" font-weight="700" text-anchor="middle" fill="#3a3050" letter-spacing="0">C++</text></svg>
<div id="t100" class="t" style="left:875.4px;top:108.3px;line-height:30px;letter-spacing:-0.176px;">C/C++ Header File</div>
<svg style="left:844px;top:110.0px" width="24.5" height="24" viewBox="0 0 24.5 24"><g transform="translate(2.6,0)"><path fill="#8a959d" d="M7.6,0 H16.4 V11.6 H0 V7.6 H7.6 Z"/><path fill="#8a959d" d="M0.5,6.2 L6.2,0.5 V6.2 Z"/></g><rect x="0" y="13.1" width="24.5" height="10.9" fill="#c4964a"/><text x="3.2" y="21.9" font-size="9.6" font-weight="700" text-anchor="start" fill="#4a3510" letter-spacing="0">H</text></svg>
<div id="t101" class="t" style="left:875.4px;top:155.4px;line-height:30px;letter-spacing:0.306px;">Kotlin Class/File</div>
<svg style="left:847.5px;top:157.3px" width="21" height="24" viewBox="0 0 21 24"><path fill="#8a959d" d="M8.0,0 H15.6 V22 H0 V8.0 H8.0 Z"/><path fill="#8a959d" d="M0.5,6.6 L6.6,0.5 V6.6 Z"/><path d="M9.6,12.2 H20.799999999999997 L15.2,17.799999999999997 L20.799999999999997,23.4 H9.6 Z" fill="#b89cf5" stroke="#3c3f41" stroke-width="1.6" paint-order="stroke"/></svg>
<div id="t102" class="t" style="left:875.4px;top:188.4px;line-height:30px;letter-spacing:0.212px;">Values Resource File</div>
<svg style="left:844px;top:190.5px" width="24.5" height="23.5" viewBox="0 0 24 23.5"><g transform="translate(2.6,0)"><path fill="#8a959d" d="M7.6,0 H16.4 V10.2 H0 V7.6 H7.6 Z"/><path fill="#8a959d" d="M0.5,6.2 L6.2,0.5 V6.2 Z"/></g><rect x="0" y="11.7" width="24" height="11.8" fill="#c5673a"/><text x="2.6" y="22.0" font-size="12.5" font-weight="400" text-anchor="start" fill="#50260e" letter-spacing="0.5">&lt;&gt;</text></svg>
<div id="t103" class="t" style="left:875.4px;top:221.6px;line-height:30px;letter-spacing:-0.088px;">Sample Data Directory</div>
<svg style="left:844px;top:225.7px" width="22.6" height="16.6" viewBox="0 0 22.6 16.6"><path fill="#8a959d" d="M0,0 H8.4 L10.9,2.9 H22.6 V16.6 H0 Z"/></svg>
<div id="t104" class="t" style="left:875.4px;top:254.4px;line-height:30px;letter-spacing:0.651px;">File</div>
<svg style="left:847.5px;top:256.40000000000003px" width="16" height="22.2" viewBox="0 0 16 22.2"><path fill="#8a959d" d="M8.2,0 H16 V22.2 H0 V8.2 H8.2 Z"/><path fill="#8a959d" d="M0.5,6.8 L6.8,0.5 V6.8 Z"/><path d="M3,10.8 H13 M3,14.4 H13 M3,18 H9.5" stroke="#3c3f41" stroke-width="1.5"/></svg>
<div id="t105" class="t" style="left:875.4px;top:287.5px;line-height:30px;letter-spacing:0.289px;">Scratch File</div>
<svg style="left:847.5px;top:288.2px" width="21" height="24" viewBox="0 0 21 24"><g transform="translate(0,2)"><path fill="#8a959d" d="M8.2,0 H16 V22 H0 V8.2 H8.2 Z"/><path fill="#8a959d" d="M0.5,6.8 L6.8,0.5 V6.8 Z"/><path d="M3,10.8 H13 M3,14.4 H13 M3,18 H9.5" stroke="#3c3f41" stroke-width="1.5"/></g><circle cx="15.3" cy="5.7" r="5.7" fill="#40b6e0" stroke="#3c3f41" stroke-width="1.4" paint-order="stroke"/><path d="M15.3,2.6 V6 L17.4,7.6" stroke="#fff" stroke-width="1.3" fill="none"/></svg>
<div id="t106" class="t" style="left:875.4px;top:320.7px;line-height:30px;letter-spacing:0.065px;">Directory</div>
<svg style="left:844px;top:324.8px" width="22.6" height="16.6" viewBox="0 0 22.6 16.6"><path fill="#8a959d" d="M0,0 H8.4 L10.9,2.9 H22.6 V16.6 H0 Z"/></svg>
<div id="t107" class="t" style="left:875.4px;top:354.1px;line-height:30px;letter-spacing:0.052px;">Image Asset</div>
<svg style="left:845.7px;top:360.8px" width="19.3" height="12.9" viewBox="0 0 20 13.3"><path d="M0,13 C0,6.6 4.4,2.7 10,2.7 C15.6,2.7 20,6.6 20,13 Z" fill="#6bd894"/><path d="M5.2,4.6 L3,0.6 M14.8,4.6 L17,0.6" stroke="#6bd894" stroke-width="1.5" stroke-linecap="round"/><circle cx="5.8" cy="9" r="1" fill="#3c3f41"/><circle cx="14.2" cy="9" r="1" fill="#3c3f41"/></svg>
<div id="t108" class="t" style="left:875.4px;top:387.3px;line-height:30px;letter-spacing:0.305px;">Vector Asset</div>
<svg style="left:845.7px;top:394.0px" width="19.3" height="12.9" viewBox="0 0 20 13.3"><path d="M0,13 C0,6.6 4.4,2.7 10,2.7 C15.6,2.7 20,6.6 20,13 Z" fill="#6bd894"/><path d="M5.2,4.6 L3,0.6 M14.8,4.6 L17,0.6" stroke="#6bd894" stroke-width="1.5" stroke-linecap="round"/><circle cx="5.8" cy="9" r="1" fill="#3c3f41"/><circle cx="14.2" cy="9" r="1" fill="#3c3f41"/></svg>
<div id="t109" class="t" style="left:875.4px;top:433.9px;line-height:30px;letter-spacing:0.237px;">Kotlin Script</div>
<svg style="left:846px;top:436.3px" width="22" height="23.5" viewBox="0 0 22 23.5"><path fill="#8a959d" d="M1.4,0 H18 C19.4,3.4 19.4,7.2 18,10.8 H9.7 V21.8 H1.1 C-0.9,18 0.2,14 1.6,10.6 C2.9,7.2 3,4.2 1.4,0 Z"/><path d="M11,12.5 H22.2 L16.6,18.1 L22.2,23.7 H11 Z" fill="#b89cf5" stroke="#3c3f41" stroke-width="1.6" paint-order="stroke"/></svg>
<div id="t110" class="t" style="left:875.4px;top:467.0px;line-height:30px;letter-spacing:0.151px;">Kotlin Worksheet</div>
<svg style="left:846px;top:469.4px" width="22" height="23.5" viewBox="0 0 22 23.5"><path fill="#8a959d" d="M1.4,0 H18 C19.4,3.4 19.4,7.2 18,10.8 H9.7 V21.8 H1.1 C-0.9,18 0.2,14 1.6,10.6 C2.9,7.2 3,4.2 1.4,0 Z"/><path d="M11,12.5 H22.2 L16.6,18.1 L22.2,23.7 H11 Z" fill="#b89cf5" stroke="#3c3f41" stroke-width="1.6" paint-order="stroke"/></svg>
<div id="t111" class="t" style="left:875.4px;top:500.1px;line-height:30px;letter-spacing:0.225px;">CMakeLists.txt</div>
<svg style="left:844px;top:502.2px" width="23" height="22.2" viewBox="0 0 23 22.2"><path d="M11.3,0 L11.9,13.6 L0,22 Z" fill="#3b46cf"/><path d="M12,0.2 L23,21.6 L13.1,12.6 Z" fill="#cf4249"/><path d="M0.4,22.2 L11.2,15.2 L22.8,22.2 Z" fill="#3fcf30"/><path d="M11.9,13.6 L13.1,12.6 L16.5,16.4 L11.2,15.2 Z" fill="#6e7073"/></svg>
<div id="t112" class="t" style="left:875.4px;top:547.3px;line-height:30px;letter-spacing:0.167px;">Activity</div>
<svg style="left:845.7px;top:554.0px" width="19.3" height="12.9" viewBox="0 0 20 13.3"><path d="M0,13 C0,6.6 4.4,2.7 10,2.7 C15.6,2.7 20,6.6 20,13 Z" fill="#6bd894"/><path d="M5.2,4.6 L3,0.6 M14.8,4.6 L17,0.6" stroke="#6bd894" stroke-width="1.5" stroke-linecap="round"/><circle cx="5.8" cy="9" r="1" fill="#3c3f41"/><circle cx="14.2" cy="9" r="1" fill="#3c3f41"/></svg>
<svg style="left:1089px;top:554.5px" width="9" height="14" viewBox="0 0 9 14"><path d="M1,1 L7.6,7 L1,13" stroke="#afb1b3" stroke-width="1.7" fill="none"/></svg>
<div id="t113" class="t" style="left:875.4px;top:580.4px;line-height:30px;letter-spacing:0.135px;">Fragment</div>
<svg style="left:845.7px;top:587.0999999999999px" width="19.3" height="12.9" viewBox="0 0 20 13.3"><path d="M0,13 C0,6.6 4.4,2.7 10,2.7 C15.6,2.7 20,6.6 20,13 Z" fill="#6bd894"/><path d="M5.2,4.6 L3,0.6 M14.8,4.6 L17,0.6" stroke="#6bd894" stroke-width="1.5" stroke-linecap="round"/><circle cx="5.8" cy="9" r="1" fill="#3c3f41"/><circle cx="14.2" cy="9" r="1" fill="#3c3f41"/></svg>
<svg style="left:1089px;top:587.5999999999999px" width="9" height="14" viewBox="0 0 9 14"><path d="M1,1 L7.6,7 L1,13" stroke="#afb1b3" stroke-width="1.7" fill="none"/></svg>
<div id="t114" class="t" style="left:875.4px;top:613.4px;line-height:30px;letter-spacing:0.467px;">Folder</div>
<svg style="left:845.7px;top:620.0999999999999px" width="19.3" height="12.9" viewBox="0 0 20 13.3"><path d="M0,13 C0,6.6 4.4,2.7 10,2.7 C15.6,2.7 20,6.6 20,13 Z" fill="#6bd894"/><path d="M5.2,4.6 L3,0.6 M14.8,4.6 L17,0.6" stroke="#6bd894" stroke-width="1.5" stroke-linecap="round"/><circle cx="5.8" cy="9" r="1" fill="#3c3f41"/><circle cx="14.2" cy="9" r="1" fill="#3c3f41"/></svg>
<svg style="left:1089px;top:620.5999999999999px" width="9" height="14" viewBox="0 0 9 14"><path d="M1,1 L7.6,7 L1,13" stroke="#afb1b3" stroke-width="1.7" fill="none"/></svg>
<div id="t115" class="t" style="left:875.4px;top:646.5px;line-height:30px;letter-spacing:0.337px;">Service</div>
<svg style="left:845.7px;top:653.1999999999999px" width="19.3" height="12.9" viewBox="0 0 20 13.3"><path d="M0,13 C0,6.6 4.4,2.7 10,2.7 C15.6,2.7 20,6.6 20,13 Z" fill="#6bd894"/><path d="M5.2,4.6 L3,0.6 M14.8,4.6 L17,0.6" stroke="#6bd894" stroke-width="1.5" stroke-linecap="round"/><circle cx="5.8" cy="9" r="1" fill="#3c3f41"/><circle cx="14.2" cy="9" r="1" fill="#3c3f41"/></svg>
<svg style="left:1089px;top:653.6999999999999px" width="9" height="14" viewBox="0 0 9 14"><path d="M1,1 L7.6,7 L1,13" stroke="#afb1b3" stroke-width="1.7" fill="none"/></svg>
<div id="t116" class="t" style="left:875.4px;top:679.6px;line-height:30px;letter-spacing:0.219px;">UiComponent</div>
<svg style="left:845.7px;top:686.3px" width="19.3" height="12.9" viewBox="0 0 20 13.3"><path d="M0,13 C0,6.6 4.4,2.7 10,2.7 C15.6,2.7 20,6.6 20,13 Z" fill="#6bd894"/><path d="M5.2,4.6 L3,0.6 M14.8,4.6 L17,0.6" stroke="#6bd894" stroke-width="1.5" stroke-linecap="round"/><circle cx="5.8" cy="9" r="1" fill="#3c3f41"/><circle cx="14.2" cy="9" r="1" fill="#3c3f41"/></svg>
<svg style="left:1089px;top:686.8px" width="9" height="14" viewBox="0 0 9 14"><path d="M1,1 L7.6,7 L1,13" stroke="#afb1b3" stroke-width="1.7" fill="none"/></svg>
<div id="t117" class="t" style="left:875.4px;top:712.7px;line-height:30px;letter-spacing:-0.134px;">Automotive</div>
<svg style="left:845.7px;top:719.4px" width="19.3" height="12.9" viewBox="0 0 20 13.3"><path d="M0,13 C0,6.6 4.4,2.7 10,2.7 C15.6,2.7 20,6.6 20,13 Z" fill="#6bd894"/><path d="M5.2,4.6 L3,0.6 M14.8,4.6 L17,0.6" stroke="#6bd894" stroke-width="1.5" stroke-linecap="round"/><circle cx="5.8" cy="9" r="1" fill="#3c3f41"/><circle cx="14.2" cy="9" r="1" fill="#3c3f41"/></svg>
<svg style="left:1089px;top:719.9px" width="9" height="14" viewBox="0 0 9 14"><path d="M1,1 L7.6,7 L1,13" stroke="#afb1b3" stroke-width="1.7" fill="none"/></svg>
<div id="t118" class="t" style="left:875.4px;top:745.7px;line-height:30px;color:#ffffff;letter-spacing:1.774px;">XML</div>
<svg style="left:845.7px;top:752.4px" width="19.3" height="12.9" viewBox="0 0 20 13.3"><path d="M0,13 C0,6.6 4.4,2.7 10,2.7 C15.6,2.7 20,6.6 20,13 Z" fill="#6bd894"/><path d="M5.2,4.6 L3,0.6 M14.8,4.6 L17,0.6" stroke="#6bd894" stroke-width="1.5" stroke-linecap="round"/><circle cx="5.8" cy="9" r="1" fill="#3c3f41"/><circle cx="14.2" cy="9" r="1" fill="#3c3f41"/></svg>
<svg style="left:1089px;top:752.9px" width="9" height="14" viewBox="0 0 9 14"><path d="M1,1 L7.6,7 L1,13" stroke="#ffffff" stroke-width="1.7" fill="none"/></svg>
<div id="t119" class="t" style="left:875.4px;top:778.8px;line-height:30px;letter-spacing:0.165px;">Wear</div>
<svg style="left:845.7px;top:785.5px" width="19.3" height="12.9" viewBox="0 0 20 13.3"><path d="M0,13 C0,6.6 4.4,2.7 10,2.7 C15.6,2.7 20,6.6 20,13 Z" fill="#6bd894"/><path d="M5.2,4.6 L3,0.6 M14.8,4.6 L17,0.6" stroke="#6bd894" stroke-width="1.5" stroke-linecap="round"/><circle cx="5.8" cy="9" r="1" fill="#3c3f41"/><circle cx="14.2" cy="9" r="1" fill="#3c3f41"/></svg>
<svg style="left:1089px;top:786.0px" width="9" height="14" viewBox="0 0 9 14"><path d="M1,1 L7.6,7 L1,13" stroke="#afb1b3" stroke-width="1.7" fill="none"/></svg>
<div id="t120" class="t" style="left:875.4px;top:811.9px;line-height:30px;letter-spacing:0.542px;">AIDL</div>
<svg style="left:845.7px;top:818.5999999999999px" width="19.3" height="12.9" viewBox="0 0 20 13.3"><path d="M0,13 C0,6.6 4.4,2.7 10,2.7 C15.6,2.7 20,6.6 20,13 Z" fill="#6bd894"/><path d="M5.2,4.6 L3,0.6 M14.8,4.6 L17,0.6" stroke="#6bd894" stroke-width="1.5" stroke-linecap="round"/><circle cx="5.8" cy="9" r="1" fill="#3c3f41"/><circle cx="14.2" cy="9" r="1" fill="#3c3f41"/></svg>
<svg style="left:1089px;top:819.0999999999999px" width="9" height="14" viewBox="0 0 9 14"><path d="M1,1 L7.6,7 L1,13" stroke="#afb1b3" stroke-width="1.7" fill="none"/></svg>
<div id="t121" class="t" style="left:875.4px;top:844.9px;line-height:30px;letter-spacing:0.384px;">Widget</div>
<svg style="left:845.7px;top:851.5999999999999px" width="19.3" height="12.9" viewBox="0 0 20 13.3"><path d="M0,13 C0,6.6 4.4,2.7 10,2.7 C15.6,2.7 20,6.6 20,13 Z" fill="#6bd894"/><path d="M5.2,4.6 L3,0.6 M14.8,4.6 L17,0.6" stroke="#6bd894" stroke-width="1.5" stroke-linecap="round"/><circle cx="5.8" cy="9" r="1" fill="#3c3f41"/><circle cx="14.2" cy="9" r="1" fill="#3c3f41"/></svg>
<svg style="left:1089px;top:852.0999999999999px" width="9" height="14" viewBox="0 0 9 14"><path d="M1,1 L7.6,7 L1,13" stroke="#afb1b3" stroke-width="1.7" fill="none"/></svg>
<div id="t122" class="t" style="left:875.4px;top:878.0px;line-height:30px;letter-spacing:0.366px;">Google</div>
<svg style="left:845.7px;top:884.6999999999999px" width="19.3" height="12.9" viewBox="0 0 20 13.3"><path d="M0,13 C0,6.6 4.4,2.7 10,2.7 C15.6,2.7 20,6.6 20,13 Z" fill="#6bd894"/><path d="M5.2,4.6 L3,0.6 M14.8,4.6 L17,0.6" stroke="#6bd894" stroke-width="1.5" stroke-linecap="round"/><circle cx="5.8" cy="9" r="1" fill="#3c3f41"/><circle cx="14.2" cy="9" r="1" fill="#3c3f41"/></svg>
<svg style="left:1089px;top:885.1999999999999px" width="9" height="14" viewBox="0 0 9 14"><path d="M1,1 L7.6,7 L1,13" stroke="#afb1b3" stroke-width="1.7" fill="none"/></svg>
<div id="t123" class="t" style="left:875.4px;top:911.1px;line-height:30px;letter-spacing:0.431px;">Compose</div>
<svg style="left:845.7px;top:917.8px" width="19.3" height="12.9" viewBox="0 0 20 13.3"><path d="M0,13 C0,6.6 4.4,2.7 10,2.7 C15.6,2.7 20,6.6 20,13 Z" fill="#6bd894"/><path d="M5.2,4.6 L3,0.6 M14.8,4.6 L17,0.6" stroke="#6bd894" stroke-width="1.5" stroke-linecap="round"/><circle cx="5.8" cy="9" r="1" fill="#3c3f41"/><circle cx="14.2" cy="9" r="1" fill="#3c3f41"/></svg>
<svg style="left:1089px;top:918.3px" width="9" height="14" viewBox="0 0 9 14"><path d="M1,1 L7.6,7 L1,13" stroke="#afb1b3" stroke-width="1.7" fill="none"/></svg>
<div id="t124" class="t" style="left:875.4px;top:944.5px;line-height:30px;letter-spacing:0.180px;">Other</div>
<svg style="left:845.7px;top:951.1999999999999px" width="19.3" height="12.9" viewBox="0 0 20 13.3"><path d="M0,13 C0,6.6 4.4,2.7 10,2.7 C15.6,2.7 20,6.6 20,13 Z" fill="#6bd894"/><path d="M5.2,4.6 L3,0.6 M14.8,4.6 L17,0.6" stroke="#6bd894" stroke-width="1.5" stroke-linecap="round"/><circle cx="5.8" cy="9" r="1" fill="#3c3f41"/><circle cx="14.2" cy="9" r="1" fill="#3c3f41"/></svg>
<svg style="left:1089px;top:951.6999999999999px" width="9" height="14" viewBox="0 0 9 14"><path d="M1,1 L7.6,7 L1,13" stroke="#afb1b3" stroke-width="1.7" fill="none"/></svg>
<div id="t125" class="t" style="left:875.4px;top:977.5px;line-height:30px;letter-spacing:0.177px;">Resource Bundle</div>
<svg style="left:846.9px;top:979.1999999999999px" width="21" height="24" viewBox="0 0 21 24"><path fill="#8a959d" d="M8.0,0 H16 V22.6 H0 V8.0 H8.0 Z"/><path fill="#8a959d" d="M0.5,6.6 L6.6,0.5 V6.6 Z"/><rect x="7.7" y="16" width="3.7" height="7.800000000000001" fill="#e8783c" stroke="#3c3f41" stroke-width="1.4" paint-order="stroke"/><rect x="12.7" y="12.9" width="3.5" height="10.9" fill="#efb95a" stroke="#3c3f41" stroke-width="1.4" paint-order="stroke"/><rect x="17.5" y="10.1" width="3.4" height="13.700000000000001" fill="#6ebe50" stroke="#3c3f41" stroke-width="1.4" paint-order="stroke"/></svg>
<div id="t126" class="t" style="left:875.4px;top:1010.5px;line-height:30px;letter-spacing:0.249px;">EditorConfig File</div>
<svg style="left:845.3px;top:1013.2px" width="20.4" height="21" viewBox="0 0 20.4 21"><g transform="translate(10.2,10.5)" fill="#8a959d" stroke="#8a959d" stroke-width="0.8" stroke-linejoin="round"><path d="M-3.3,-6.6 L-2.3,-10.2 H2.3 L3.3,-6.6 Z" transform="rotate(0)"/><path d="M-3.3,-6.6 L-2.3,-10.2 H2.3 L3.3,-6.6 Z" transform="rotate(60)"/><path d="M-3.3,-6.6 L-2.3,-10.2 H2.3 L3.3,-6.6 Z" transform="rotate(120)"/><path d="M-3.3,-6.6 L-2.3,-10.2 H2.3 L3.3,-6.6 Z" transform="rotate(180)"/><path d="M-3.3,-6.6 L-2.3,-10.2 H2.3 L3.3,-6.6 Z" transform="rotate(240)"/><path d="M-3.3,-6.6 L-2.3,-10.2 H2.3 L3.3,-6.6 Z" transform="rotate(300)"/><path fill-rule="evenodd" stroke="none" d="M0,-7.9 a7.9,7.9 0 1,0 0.01,0 Z M0,-3.4 a3.4,3.4 0 1,1 -0.01,0 Z"/></g></svg>
<div id="t127" class="t" style="right:436.4000000000001px;top:287.5px;line-height:30px;letter-spacing:0.2px;"><span class="sh">⇧</span>⌘N</div>
<div style="left:1117.5px;top:734.2px;width:413.5px;height:150px;background:#3c3f41;border:1px solid #555759;border-right-color:#444648;border-bottom-color:#4a4c4e;box-shadow:0 5px 18px rgba(0,0,0,.40);box-sizing:border-box;"></div>
<div style="left:1118.7px;top:842.6px;width:411px;height:33px;background:#3d64c4;"></div>
<div id="t128" class="t" style="left:1168.5px;top:745.6px;line-height:30px;letter-spacing:0.258px;">App Actions XML File (deprecated)</div>
<svg style="left:1140.6px;top:747.7px" width="21" height="24.5" viewBox="0 0 21 24.5"><path fill="#8a959d" d="M8.2,0 H16 V22 H0 V8.2 H8.2 Z"/><path fill="#8a959d" d="M0.5,6.8 L6.8,0.5 V6.8 Z"/><g transform="translate(7.4,15.4) scale(0.66,0.68)"><g stroke="#3c3f41" stroke-width="3.4" stroke-linejoin="round"><path d="M0,13 C0,6.6 4.4,2.7 10,2.7 C15.6,2.7 20,6.6 20,13 Z" fill="#3c3f41"/><path d="M5.2,4.6 L3,0.6 M14.8,4.6 L17,0.6" stroke-width="4.6" stroke-linecap="round"/></g><path d="M0,13 C0,6.6 4.4,2.7 10,2.7 C15.6,2.7 20,6.6 20,13 Z" fill="#62d284"/><path d="M5.2,4.6 L3,0.6 M14.8,4.6 L17,0.6" stroke="#62d284" stroke-width="1.5" stroke-linecap="round"/><circle cx="5.8" cy="9" r="1" fill="#3f7a55"/><circle cx="14.2" cy="9" r="1" fill="#3f7a55"/></g></svg>
<div id="t129" class="t" style="left:1168.5px;top:778.7px;line-height:30px;letter-spacing:0.281px;">Layout XML File</div>
<svg style="left:1140.6px;top:780.8000000000001px" width="21" height="24.5" viewBox="0 0 21 24.5"><path fill="#8a959d" d="M8.2,0 H16 V22 H0 V8.2 H8.2 Z"/><path fill="#8a959d" d="M0.5,6.8 L6.8,0.5 V6.8 Z"/><g transform="translate(7.4,15.4) scale(0.66,0.68)"><g stroke="#3c3f41" stroke-width="3.4" stroke-linejoin="round"><path d="M0,13 C0,6.6 4.4,2.7 10,2.7 C15.6,2.7 20,6.6 20,13 Z" fill="#3c3f41"/><path d="M5.2,4.6 L3,0.6 M14.8,4.6 L17,0.6" stroke-width="4.6" stroke-linecap="round"/></g><path d="M0,13 C0,6.6 4.4,2.7 10,2.7 C15.6,2.7 20,6.6 20,13 Z" fill="#62d284"/><path d="M5.2,4.6 L3,0.6 M14.8,4.6 L17,0.6" stroke="#62d284" stroke-width="1.5" stroke-linecap="round"/><circle cx="5.8" cy="9" r="1" fill="#3f7a55"/><circle cx="14.2" cy="9" r="1" fill="#3f7a55"/></g></svg>
<div id="t130" class="t" style="left:1168.5px;top:811.8px;line-height:30px;letter-spacing:0.400px;">Shortcuts XML File</div>
<svg style="left:1140.6px;top:813.9000000000001px" width="21" height="24.5" viewBox="0 0 21 24.5"><path fill="#8a959d" d="M8.2,0 H16 V22 H0 V8.2 H8.2 Z"/><path fill="#8a959d" d="M0.5,6.8 L6.8,0.5 V6.8 Z"/><g transform="translate(7.4,15.4) scale(0.66,0.68)"><g stroke="#3c3f41" stroke-width="3.4" stroke-linejoin="round"><path d="M0,13 C0,6.6 4.4,2.7 10,2.7 C15.6,2.7 20,6.6 20,13 Z" fill="#3c3f41"/><path d="M5.2,4.6 L3,0.6 M14.8,4.6 L17,0.6" stroke-width="4.6" stroke-linecap="round"/></g><path d="M0,13 C0,6.6 4.4,2.7 10,2.7 C15.6,2.7 20,6.6 20,13 Z" fill="#62d284"/><path d="M5.2,4.6 L3,0.6 M14.8,4.6 L17,0.6" stroke="#62d284" stroke-width="1.5" stroke-linecap="round"/><circle cx="5.8" cy="9" r="1" fill="#3f7a55"/><circle cx="14.2" cy="9" r="1" fill="#3f7a55"/></g></svg>
<div id="t131" class="t" style="left:1168.5px;top:844.9px;line-height:30px;color:#ffffff;letter-spacing:0.365px;">Values XML File</div>
<svg style="left:1140.6px;top:847.0px" width="21" height="24.5" viewBox="0 0 21 24.5"><path fill="#8a959d" d="M8.2,0 H16 V22 H0 V8.2 H8.2 Z"/><path fill="#8a959d" d="M0.5,6.8 L6.8,0.5 V6.8 Z"/><g transform="translate(7.4,15.4) scale(0.66,0.68)"><g stroke="#3d64c4" stroke-width="3.4" stroke-linejoin="round"><path d="M0,13 C0,6.6 4.4,2.7 10,2.7 C15.6,2.7 20,6.6 20,13 Z" fill="#3d64c4"/><path d="M5.2,4.6 L3,0.6 M14.8,4.6 L17,0.6" stroke-width="4.6" stroke-linecap="round"/></g><path d="M0,13 C0,6.6 4.4,2.7 10,2.7 C15.6,2.7 20,6.6 20,13 Z" fill="#62d284"/><path d="M5.2,4.6 L3,0.6 M14.8,4.6 L17,0.6" stroke="#62d284" stroke-width="1.5" stroke-linecap="round"/><circle cx="5.8" cy="9" r="1" fill="#3f7a55"/><circle cx="14.2" cy="9" r="1" fill="#3f7a55"/></g></svg>
</body></html>
